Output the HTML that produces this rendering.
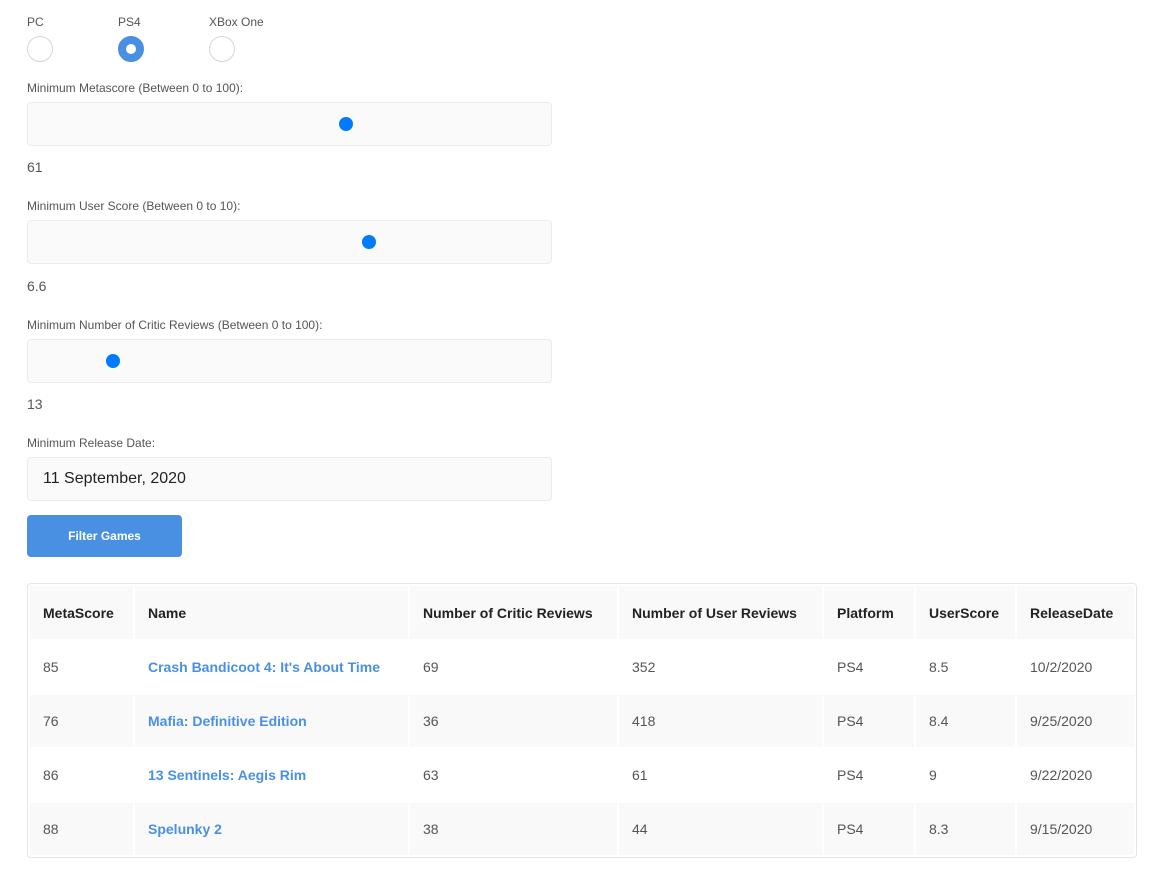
<!DOCTYPE html>
<html><head><meta charset="utf-8"><style>
body{margin:0;background:#fff;font-family:"Liberation Sans",sans-serif;color:#555;width:1159px;height:896px;position:relative;overflow:hidden}
.a{position:absolute}
.lbl{font-size:12px;color:#555}
.radio{position:absolute;top:36px;width:24px;height:24px;border:1px solid #d6d6d6;border-radius:50%;background:#fff}
.radio.on{background:#4a90e2;border-color:#4a90e2}
.radio.on:after{content:"";position:absolute;left:7px;top:7px;width:10px;height:10px;border-radius:50%;background:#fff}
.box{position:absolute;left:27px;width:523px;height:42px;background:#fafafa;border:1px solid #ececec;border-radius:4px}
.thumb{position:absolute;top:14px;width:14px;height:14px;border-radius:50%;background:#007bff}
.val{position:absolute;left:27px;font-size:14px;color:#555}
table{position:absolute;left:27px;top:583px;width:1110px;border:1px solid #e6e6e6;border-radius:4px;border-spacing:2px;table-layout:fixed;padding:0}
td,th{text-align:left;padding:0 0 0 13px;font-size:14px}
th{height:53px;background:#f9f9f9;color:#222;font-weight:bold}
td{height:52px;color:#555}
tr.g td{background:#f9f9f9}
td a{color:#4a90e2;font-weight:bold;text-decoration:none}
</style></head><body>
<div class="a lbl" style="left:27px;top:15px">PC</div>
<div class="a lbl" style="left:118px;top:15px">PS4</div>
<div class="a lbl" style="left:209px;top:15px">XBox One</div>
<div class="radio" style="left:27px"></div>
<div class="radio on" style="left:118px"></div>
<div class="radio" style="left:209px"></div>

<div class="a lbl" style="left:27px;top:81px">Minimum Metascore (Between 0 to 100):</div>
<div class="box" style="top:102px"><div class="thumb" style="left:311px"></div></div>
<div class="val" style="top:159px">61</div>

<div class="a lbl" style="left:27px;top:199px">Minimum User Score (Between 0 to 10):</div>
<div class="box" style="top:220px"><div class="thumb" style="left:334px"></div></div>
<div class="val" style="top:278px">6.6</div>

<div class="a lbl" style="left:27px;top:318px">Minimum Number of Critic Reviews (Between 0 to 100):</div>
<div class="box" style="top:339px"><div class="thumb" style="left:78px"></div></div>
<div class="val" style="top:396px">13</div>

<div class="a lbl" style="left:27px;top:436px">Minimum Release Date:</div>
<div class="box" style="top:457px"><div style="position:absolute;left:15px;top:12px;font-size:16px;color:#222">11 September, 2020</div></div>

<div class="a" style="left:27px;top:515px;width:155px;height:42px;background:#4a90e2;border-radius:4px;color:#fff;font-size:12px;font-weight:bold;text-align:center;line-height:42px">Filter Games</div>

<table>
<colgroup><col style="width:103px"><col style="width:273px"><col style="width:207px"><col style="width:203px"><col style="width:90px"><col style="width:99px"><col style="width:117px"></colgroup>
<tr><th>MetaScore</th><th>Name</th><th>Number of Critic Reviews</th><th>Number of User Reviews</th><th>Platform</th><th>UserScore</th><th>ReleaseDate</th></tr>
<tr><td>85</td><td><a>Crash Bandicoot 4: It's About Time</a></td><td>69</td><td>352</td><td>PS4</td><td>8.5</td><td>10/2/2020</td></tr>
<tr class="g"><td>76</td><td><a>Mafia: Definitive Edition</a></td><td>36</td><td>418</td><td>PS4</td><td>8.4</td><td>9/25/2020</td></tr>
<tr><td>86</td><td><a>13 Sentinels: Aegis Rim</a></td><td>63</td><td>61</td><td>PS4</td><td>9</td><td>9/22/2020</td></tr>
<tr class="g"><td>88</td><td><a>Spelunky 2</a></td><td>38</td><td>44</td><td>PS4</td><td>8.3</td><td>9/15/2020</td></tr>
</table>
</body></html>
